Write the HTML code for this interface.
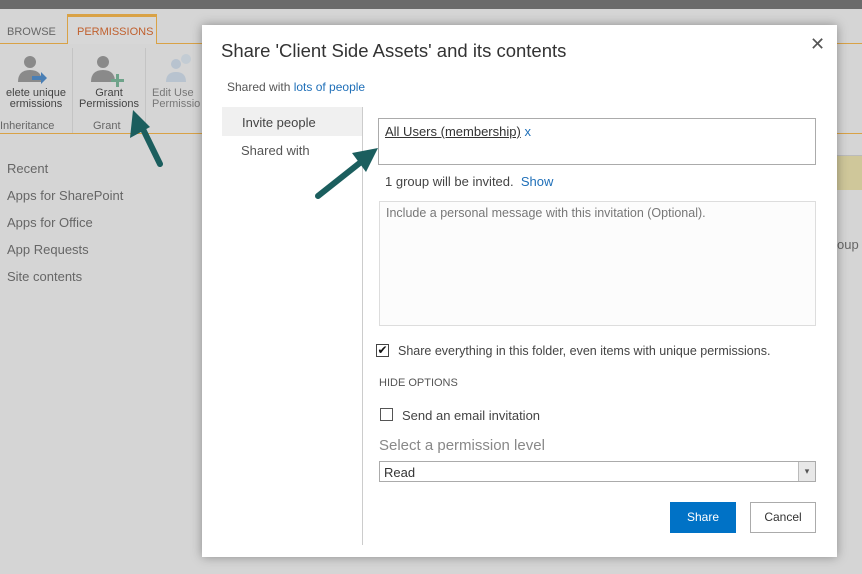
<!DOCTYPE html>
<html><head><meta charset="utf-8"><style>
*{margin:0;padding:0;box-sizing:border-box}
body{width:862px;height:574px;overflow:hidden;background:#d5d5d5;font-family:"Liberation Sans",sans-serif;position:relative;color:#444}
.a{position:absolute;white-space:nowrap}
</style></head><body>
<div class="a" style="left:0;top:0;width:862px;height:9px;background:#6b6b6b"></div>
<div class="a" style="left:0;top:43px;width:862px;height:1px;background:#d9a246"></div>
<div class="a" style="left:0;top:133px;width:862px;height:1px;background:#d9a246"></div>
<div class="a" style="left:67px;top:14px;width:90px;height:30px;background:#d7d7d7;border-top:3px solid #d9a246;border-left:1px solid #d9a246;border-right:1px solid #d9a246"></div>
<div class="a" style="left:7px;top:26px;font-size:11px;color:#666">BROWSE</div>
<div class="a" style="left:77px;top:26px;font-size:11px;color:#c0602e">PERMISSIONS</div>
<div class="a" style="left:72px;top:48px;width:1px;height:85px;background:#c4c4c4"></div>
<div class="a" style="left:145px;top:48px;width:1px;height:85px;background:#c4c4c4"></div>
<svg class="a" style="left:0;top:50px" width="210" height="40">
<circle cx="30" cy="12" r="6" fill="#8a8a8a"/><path d="M18 32 q0-12 12-12 q12 0 12 12z" fill="#8a8a8a"/><path d="M32 26h9v-4l6 6-6 6v-4h-9z" fill="#4a7fb5"/>
<circle cx="103" cy="12" r="6" fill="#8a8a8a"/><path d="M91 32 q0-12 12-12 q12 0 12 12z" fill="#8a8a8a"/><path d="M116 24h3v5h5v3h-5v5h-3v-5h-5v-3h5z" fill="#6ea38a"/>
<circle cx="176" cy="14" r="5" fill="#b8c3cf"/><circle cx="186" cy="9" r="5" fill="#c3ccd4"/><path d="M166 32q0-10 10-10t10 10z" fill="#b8c3cf"/>
</svg>
<div class="a" style="left:0;top:88px;width:72px;text-align:center;font-size:11px;line-height:11px;color:#444">elete unique<br>ermissions</div>
<div class="a" style="left:73px;top:88px;width:72px;text-align:center;font-size:11px;line-height:11px;color:#444">Grant<br>Permissions</div>
<div class="a" style="left:152px;top:88px;font-size:11px;line-height:11px;color:#777">Edit Use<br>Permissio</div>
<div class="a" style="left:0;top:120px;font-size:11px;color:#666">Inheritance</div>
<div class="a" style="left:93px;top:120px;font-size:11px;color:#666">Grant</div>
<div class="a" style="left:7px;top:155px;font-size:13px;color:#666;line-height:27px">Recent<br>Apps for SharePoint<br>Apps for Office<br>App Requests<br>Site contents</div>
<div class="a" style="left:837px;top:155px;width:25px;height:35px;background:#cfc79a;border-top:1px solid #bbb"></div>
<div class="a" style="left:837px;top:237px;font-size:13px;color:#666">oup</div>
<div class="a" style="left:202px;top:25px;width:635px;height:532px;background:#fff;box-shadow:0 0 10px rgba(0,0,0,.35)"></div>
<div class="a" style="left:221px;top:40px;font-size:18.5px;color:#333">Share 'Client Side Assets' and its contents</div>
<div class="a" style="left:810px;top:34px;font-size:18px;color:#555">✕</div>
<div class="a" style="left:227px;top:80px;font-size:12px;color:#555">Shared with <span style="color:#1f6fb8">lots of people</span></div>
<div class="a" style="left:362px;top:107px;width:1px;height:438px;background:#ccc"></div>
<div class="a" style="left:222px;top:107px;width:140px;height:29px;background:#f0f0f0"></div>
<div class="a" style="left:242px;top:115px;font-size:13px;color:#444">Invite people</div>
<div class="a" style="left:241px;top:143px;font-size:13px;color:#555">Shared with</div>
<div class="a" style="left:378px;top:118px;width:438px;height:47px;border:1px solid #ababab"></div>
<div class="a" style="left:385px;top:124px;font-size:13px;color:#333"><u>All Users (membership)</u> <span style="color:#1f6fb8">x</span></div>
<div class="a" style="left:385px;top:174px;font-size:13px;color:#444">1 group will be invited. &nbsp;<span style="color:#1f6fb8">Show</span></div>
<div class="a" style="left:379px;top:201px;width:437px;height:125px;border:1px solid #ddd;background:#fcfcfc"></div>
<div class="a" style="left:386px;top:206px;font-size:12.5px;color:#777">Include a personal message with this invitation (Optional).</div>
<div class="a" style="left:376px;top:344px;width:13px;height:13px;border:1px solid #444;font-size:12px;line-height:11px;text-align:center;color:#111">✔</div>
<div class="a" style="left:398px;top:344px;font-size:12.5px;color:#444">Share everything in this folder, even items with unique permissions.</div>
<div class="a" style="left:379px;top:377px;font-size:11px;color:#555">HIDE OPTIONS</div>
<div class="a" style="left:380px;top:408px;width:13px;height:13px;border:1px solid #555"></div>
<div class="a" style="left:402px;top:408px;font-size:13px;color:#444">Send an email invitation</div>
<div class="a" style="left:379px;top:437px;font-size:15px;color:#888">Select a permission level</div>
<div class="a" style="left:379px;top:461px;width:437px;height:21px;border:1px solid #ababab"></div>
<div class="a" style="left:384px;top:465px;font-size:13px;color:#333">Read</div>
<div class="a" style="left:798px;top:462px;width:17px;height:19px;background:#e8e8e8;border-left:1px solid #bbb;text-align:center;font-size:9px;line-height:19px;color:#555">▾</div>
<div class="a" style="left:670px;top:502px;width:66px;height:31px;background:#0072c6;color:#fff;font-size:12px;text-align:center;line-height:31px">Share</div>
<div class="a" style="left:750px;top:502px;width:66px;height:31px;border:1px solid #ababab;color:#333;font-size:12px;text-align:center;line-height:29px">Cancel</div>
<svg class="a" style="left:0;top:0" width="862" height="574">
<g fill="none" stroke="#1b5e5e" stroke-width="6" stroke-linecap="round">
<line x1="160" y1="164" x2="140" y2="123"/>
<line x1="318" y1="196" x2="366" y2="158"/>
</g>
<polygon points="133,110 130,138 150,127" fill="#1b5e5e"/>
<polygon points="378,148 352,153 366,172" fill="#1b5e5e"/>
</svg>
</body></html>
